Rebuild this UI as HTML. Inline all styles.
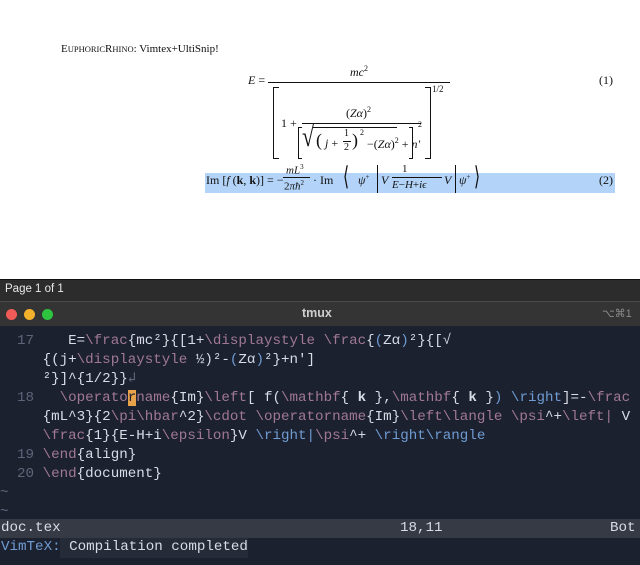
<!DOCTYPE html>
<html><head><meta charset="utf-8"><style>
body{margin:0;width:640px;height:565px;overflow:hidden;background:#fff;position:relative;font-family:"Liberation Serif",serif;}
.a{position:absolute;white-space:nowrap}
.m{font-family:"Liberation Serif",serif;font-size:12px;color:#111}
i{font-style:italic}
.term{position:absolute;left:0;top:326px;width:640px;height:239px;background:#1c2130;}
.code{font-family:"Liberation Mono","DejaVu Sans Mono",monospace;font-size:14.2px;color:#d8dce6;position:absolute;white-space:pre;line-height:19px}
.c{color:#a07896}.b{color:#6f9bd1}.n{color:#5d6578}.g{color:#7a8094}
</style></head><body>
<div class="a" style="left:61px;top:43px;font-size:11px;color:#111">E<span style="font-size:8.5px">UPHORIC</span>R<span style="font-size:8.5px">HINO</span>: Vimtex+UltiSnip!</div>

<!-- eq 1 -->
<div class="a m" style="left:248px;top:73px"><i>E</i> =</div>
<div class="a m" style="left:350px;top:64px"><i>mc</i><sup style="font-size:8px">2</sup></div>
<div class="a" style="left:268px;top:82px;width:182px;height:1px;background:#111"></div>
<div class="a m" style="left:432px;top:84px;font-size:9px">1/2</div>
<div class="a" style="left:273px;top:87px;width:5px;height:70px;border:1.3px solid #111;border-right:none"></div>
<div class="a" style="left:425px;top:87px;width:5px;height:70px;border:1.3px solid #111;border-left:none"></div>
<div class="a m" style="left:281px;top:116px">1 +</div>
<div class="a m" style="left:346px;top:105px">(<i>Zα</i>)<sup style="font-size:8px">2</sup></div>
<div class="a" style="left:302px;top:123px;width:119px;height:1px;background:#111"></div>
<div class="a" style="left:298px;top:127px;width:3px;height:30px;border:1px solid #111;border-right:none"></div>
<div class="a" style="left:409px;top:127px;width:3px;height:30px;border:1px solid #111;border-left:none"></div>
<div class="a m" style="left:302px;top:124px;font-size:22px;transform:scaleY(1.3)">√</div>
<div class="a" style="left:313px;top:127px;width:84px;height:1px;background:#111"></div>
<div class="a m" style="left:316px;top:130px;font-size:18px">(</div>
<div class="a m" style="left:325px;top:136px"><i>j</i> +</div>
<div class="a m" style="left:344px;top:128px;font-size:10px">1</div>
<div class="a" style="left:343px;top:141px;width:8px;height:1px;background:#111"></div>
<div class="a m" style="left:344px;top:142px;font-size:10px">2</div>
<div class="a m" style="left:352px;top:130px;font-size:18px">)</div>
<div class="a m" style="left:360px;top:136px"><sup style="font-size:8px;position:relative;top:-8px">2</sup> −(<i>Zα</i>)<sup style="font-size:8px">2</sup> + <i>n′</i></div>
<div class="a m" style="left:418px;top:120px;font-size:8px">2</div>
<div class="a m" style="left:599px;top:73px">(1)</div>

<!-- eq 2 -->
<div class="a" style="left:205px;top:173px;width:410px;height:20px;background:#b3d4f8"></div>
<div class="a m" style="left:206px;top:173px">Im [<i>f</i> (<b>k</b>, <b>k</b>)] = −</div>
<div class="a m" style="left:286px;top:163px;font-size:11px"><i>mL</i><sup style="font-size:7px">3</sup></div>
<div class="a" style="left:283px;top:177px;width:27px;height:1px;background:#111"></div>
<div class="a m" style="left:284px;top:179px;font-size:11px">2<i>πħ</i><sup style="font-size:7px">2</sup></div>
<div class="a m" style="left:313px;top:173px">· Im</div>
<div class="a m" style="left:341px;top:162px;font-size:26px;transform:scaleX(.6)">⟨</div>
<div class="a m" style="left:358px;top:173px"><i>ψ</i><sup style="font-size:7px">+</sup></div>
<div class="a" style="left:377px;top:165px;width:1px;height:28px;background:#111"></div>
<div class="a m" style="left:381px;top:173px"><i>V</i></div>
<div class="a m" style="left:402px;top:163px;font-size:11px">1</div>
<div class="a" style="left:392px;top:177px;width:50px;height:1px;background:#111"></div>
<div class="a m" style="left:392px;top:179px;font-size:11px"><i>E</i>−<i>H</i>+<i>iϵ</i></div>
<div class="a m" style="left:444px;top:173px"><i>V</i></div>
<div class="a" style="left:455px;top:165px;width:1px;height:28px;background:#111"></div>
<div class="a m" style="left:459px;top:173px"><i>ψ</i><sup style="font-size:7px">+</sup></div>
<div class="a m" style="left:472px;top:162px;font-size:26px;transform:scaleX(.6)">⟩</div>
<div class="a m" style="left:599px;top:173px">(2)</div>

<div class="a" style="left:0;top:279px;width:640px;height:22px;background:#2c2c2c;border-top:1px solid #111"></div>
<div class="a" style="left:5px;top:283px;font-family:'Liberation Sans',sans-serif;font-size:11.5px;color:#e8e8e8">Page 1 of 1</div>
<div class="a" style="left:0;top:301px;width:640px;height:25px;background:#343434;border-top:1px solid #4a4a4a"></div>
<div class="a" style="left:6px;top:309px;width:11px;height:11px;border-radius:50%;background:#ef5b56"></div>
<div class="a" style="left:24px;top:309px;width:11px;height:11px;border-radius:50%;background:#f4b12c"></div>
<div class="a" style="left:42px;top:309px;width:11px;height:11px;border-radius:50%;background:#2ec440"></div>
<div class="a" style="left:302px;top:306px;font-family:'Liberation Sans',sans-serif;font-size:12.5px;font-weight:bold;color:#cfcfcf">tmux</div>
<div class="a" style="left:602px;top:307px;font-family:'Liberation Sans',sans-serif;font-size:11px;color:#8a8a8a">⌥⌘1</div>

<div class="term"></div>
<div class="code" style="left:0;top:332px"><span class="n">  17 </span>   E=<span class="c">\frac</span>{mc²}{[1+<span class="c">\displaystyle</span> <span class="c">\frac</span>{<span class="b">(</span>Zα<span class="b">)</span>²}{[√
<span class="n">     </span>{(j+<span class="c">\displaystyle</span> ½)²-<span class="b">(</span>Zα<span class="b">)</span>²}+n']
<span class="n">     </span>²}]^{1/2}}<span class="n">↲</span>
<span class="n">  18 </span>  <span class="c">\operato</span><span style="background:#e8a24a;color:#1c2130">r</span><span class="c">name</span>{Im}<span class="c">\left</span>[ f(<span class="c">\mathbf</span>{ <b>k</b> },<span class="c">\mathbf</span>{ <b>k</b> }<span class="b">) \right</span>]=-<span class="c">\frac</span>
<span class="n">     </span>{mL^3}{2<span class="c">\pi\hbar</span>^2}<span class="c">\cdot \operatorname</span>{Im}<span class="c">\left\langle \psi</span>^+<span class="c">\left|</span> V
<span class="n">     </span><span class="c">\frac</span>{1}{E-H+i<span class="c">\epsilon</span>}V <span class="b">\right|</span><span class="c">\psi</span>^+ <span class="b">\right\rangle</span>
<span class="n">  19 </span><span class="c">\end</span>{align}
<span class="n">  20 </span><span class="c">\end</span>{document}
<span class="n">~</span>
<span class="n">~</span></div>
<div class="a" style="left:0;top:519px;width:640px;height:19px;background:#363a45"></div>
<div class="code" style="left:1px;top:519px">doc.tex</div>
<div class="code" style="left:400px;top:519px">18,11</div>
<div class="code" style="left:610px;top:519px">Bot</div>
<div class="a" style="left:60px;top:538px;width:188px;height:20px;background:#262b38"></div>
<div class="code" style="left:1px;top:538px"><span class="b">VimTeX:</span> Compilation completed</div>
</body></html>
